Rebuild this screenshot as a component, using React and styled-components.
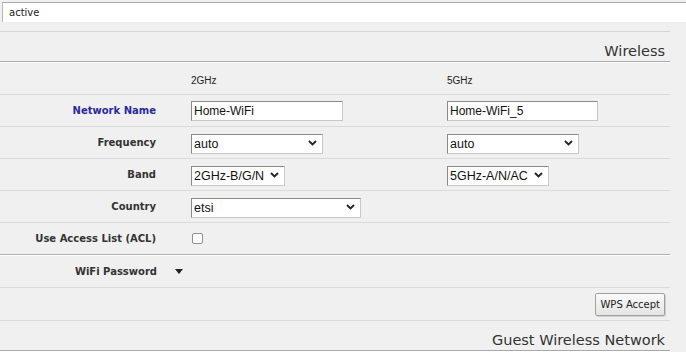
import styled, { createGlobalStyle } from "styled-components"

const GlobalStyle = createGlobalStyle`
  html, body {
    margin: 0;
    padding: 0;
    background: #f0f0f0;
  }
  body {
    font-family: "DejaVu Sans", Verdana, sans-serif;
    color: #333;
  }
`

const Page = styled.div`
  min-height: 352px;
  background: #f0f0f0;
  padding-top: 2px;
`

const StatusField = styled.div`
  margin-left: 2px;
  height: 19px;
  line-height: 19px;
  padding-left: 6px;
  background: #fff;
  border-top: 1px solid #a8a8a8;
  border-left: 1px solid #b8b8b8;
  font-size: 10px;
  color: #222;
`

const Panel = styled.div`
  width: 670px;
`

const Spacer = styled.div`
  height: 9px;
  border-bottom: 1px solid #d6d6d6;
`

const SectionTitle = styled.div`
  height: 30px;
  display: flex;
  align-items: flex-end;
  justify-content: flex-end;
  padding: 0 5px 2px 0;
  box-sizing: border-box;
  border-bottom: 1px solid #a9a9a9;
  box-shadow: 0 1px 0 #fff;
  font-size: 14.5px;
  color: #333;
  margin-bottom: 1px;
`

const Row = styled.div`
  display: grid;
  grid-template-columns: 191px 256px 1fr;
  align-items: center;
  height: 32px;
  box-sizing: border-box;
  border-bottom: 1px solid ${({ strong }) => (strong ? "#b0b0b0" : "#dadada")};
  box-shadow: ${({ strong }) => (strong ? "0 1px 0 #fff" : "none")};
  margin-bottom: ${({ strong }) => (strong ? "1px" : "0")};
`

const ButtonRow = styled.div`
  display: flex;
  justify-content: flex-end;
  align-items: center;
  height: 33px;
  padding-right: 5px;
  box-sizing: border-box;
  border-bottom: 1px solid #dadada;
`

const Label = styled.div`
  text-align: right;
  padding-right: 35px;
  font-size: 10px;
  font-weight: bold;
  color: ${({ accent }) => (accent ? "#2a2a9a" : "#333")};
  white-space: nowrap;
`

const ToggleLabel = styled(Label)`
  display: flex;
  justify-content: flex-end;
  align-items: center;
  gap: 18px;
  padding-right: 0;
  &::after {
    content: "";
    width: 0;
    height: 0;
    border-left: 4px solid transparent;
    border-right: 4px solid transparent;
    border-top: 5px solid #222;
    margin-right: 8px;
  }
`

const Cell = styled.div`
  display: flex;
  align-items: center;
  padding-top: ${({ low }) => (low ? "3px" : "0")};
`

const BandTitle = styled.span`
  font-family: "Liberation Sans", Arial, sans-serif;
  font-size: 10px;
  color: #222;
`

const TextInput = styled.input`
  width: ${({ w }) => w}px;
  height: 20px;
  box-sizing: border-box;
  margin: 0;
  padding: 0 2px;
  border: 1px solid #8a8a8a;
  border-right-color: #c8c8c8;
  border-bottom-color: #c8c8c8;
  background: #fff;
  font-family: "Liberation Sans", Arial, sans-serif;
  font-size: 12px;
  color: #111;
  outline: none;
`

const SelectWrap = styled.div`
  position: relative;
  width: ${({ w }) => w}px;
  height: 20px;
`

const Select = styled.select`
  appearance: none;
  width: 100%;
  height: 100%;
  box-sizing: border-box;
  margin: 0;
  padding: 0 18px 0 2px;
  border: 1px solid #8a8a8a;
  border-right-color: #c8c8c8;
  border-bottom-color: #c8c8c8;
  border-radius: 0;
  background: #fff;
  font-family: "Liberation Sans", Arial, sans-serif;
  font-size: 12.5px;
  color: #111;
  outline: none;
`

const Chevron = styled.svg`
  position: absolute;
  right: 6px;
  top: 7px;
  width: 9px;
  height: 6px;
  pointer-events: none;
`

const Checkbox = styled.span`
  display: inline-block;
  width: 9px;
  height: 9px;
  margin-left: 1px;
  border: 1px solid #8f8f8f;
  border-radius: 2px;
  background: #fff;
`

const Button = styled.button`
  height: 23px;
  padding: 0 4px;
  border: 1px solid #a0a0a0;
  border-radius: 2px;
  background: linear-gradient(#fafafa, #e4e4e4);
  box-shadow: 1px 1px 1px rgba(0, 0, 0, 0.15);
  font-family: "DejaVu Sans", Verdana, sans-serif;
  font-size: 10px;
  color: #222;
`

function Dropdown({ w, value }) {
  return (
    <SelectWrap w={w}>
      <Select defaultValue={value}>
        <option>{value}</option>
      </Select>
      <Chevron viewBox="0 0 9 6">
        <path d="M1 1 L4.5 4.5 L8 1" fill="none" stroke="#222" strokeWidth="1.8" />
      </Chevron>
    </SelectWrap>
  )
}

export default function App() {
  return (
    <Page>
      <GlobalStyle />
      <StatusField>active</StatusField>
      <Panel>
        <Spacer />
        <SectionTitle>Wireless</SectionTitle>
        <Row>
          <div />
          <Cell low><BandTitle>2GHz</BandTitle></Cell>
          <Cell low><BandTitle>5GHz</BandTitle></Cell>
        </Row>
        <Row>
          <Label accent>Network Name</Label>
          <Cell><TextInput w={152} defaultValue="Home-WiFi" /></Cell>
          <Cell><TextInput w={151} defaultValue="Home-WiFi_5" /></Cell>
        </Row>
        <Row>
          <Label>Frequency</Label>
          <Cell><Dropdown w={132} value="auto" /></Cell>
          <Cell><Dropdown w={132} value="auto" /></Cell>
        </Row>
        <Row>
          <Label>Band</Label>
          <Cell><Dropdown w={94} value="2GHz-B/G/N" /></Cell>
          <Cell><Dropdown w={102} value="5GHz-A/N/AC" /></Cell>
        </Row>
        <Row>
          <Label>Country</Label>
          <Cell><Dropdown w={170} value="etsi" /></Cell>
          <div />
        </Row>
        <Row strong>
          <Label>Use Access List (ACL)</Label>
          <Cell><Checkbox /></Cell>
          <div />
        </Row>
        <Row>
          <ToggleLabel>WiFi Password</ToggleLabel>
          <div />
          <div />
        </Row>
        <ButtonRow>
          <Button>WPS Accept</Button>
        </ButtonRow>
        <SectionTitle>Guest Wireless Network</SectionTitle>
      </Panel>
    </Page>
  )
}
